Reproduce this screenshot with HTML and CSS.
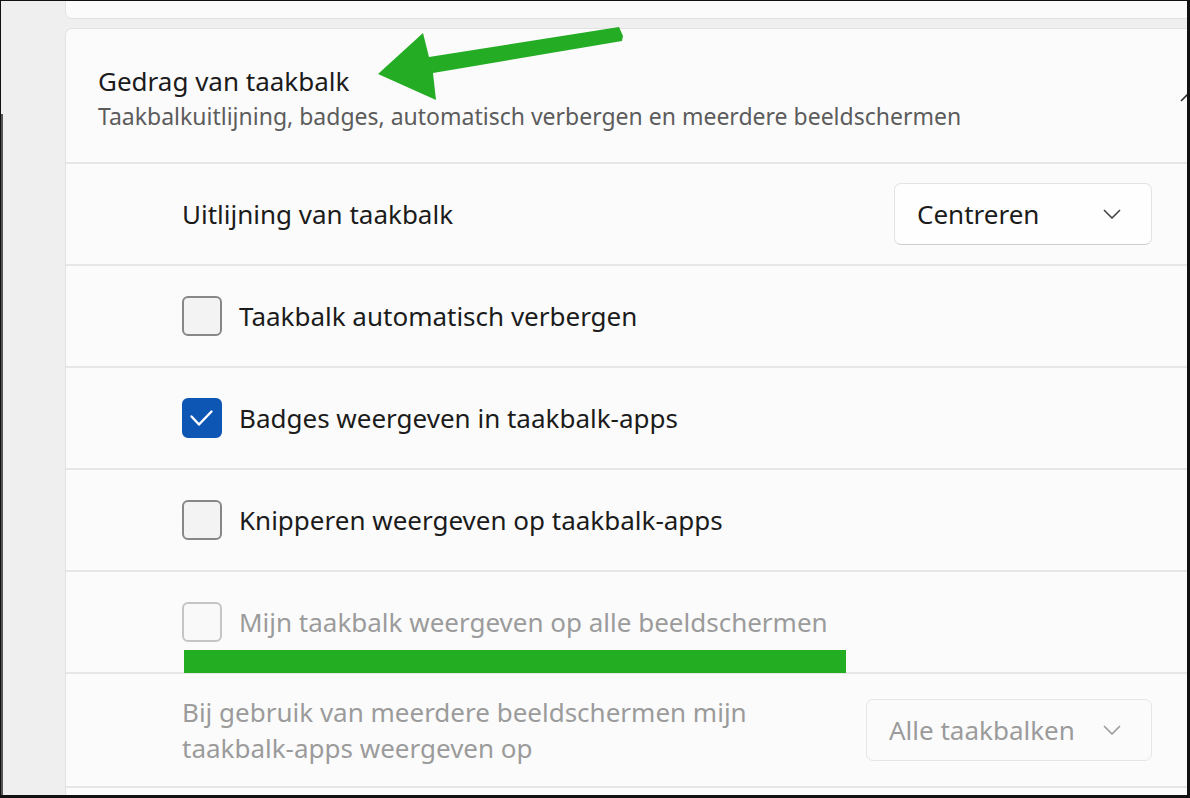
FILE: index.html
```html
<!DOCTYPE html>
<html lang="nl">
<head>
<meta charset="utf-8">
<title>Gedrag van taakbalk</title>
<link rel="stylesheet" href="styles.css">
</head>
<body>
<div class="frame">
  <div class="main">
    <div class="card prev"></div>
    <div class="card">
      <div class="header">
        <div class="header-text">
          <div class="title">Gedrag van taakbalk</div>
          <div class="subtitle">Taakbalkuitlijning, badges, automatisch verbergen en meerdere beeldschermen</div>
        </div>
        <svg class="chev-up" width="18" height="10" viewBox="0 0 18 10"><polyline points="1,9 9,1 17,9" fill="none" stroke="#333" stroke-width="1.6"/></svg>
      </div>
      <div class="row">
        <span class="label">Uitlijning van taakbalk</span>
        <div class="dropdown">
          <span>Centreren</span>
          <svg width="18" height="10" viewBox="0 0 18 10"><polyline points="1,1 9,9 17,1" fill="none" stroke="#444" stroke-width="1.6"/></svg>
        </div>
      </div>
      <div class="row">
        <span class="check"></span>
        <span class="label">Taakbalk automatisch verbergen</span>
      </div>
      <div class="row">
        <span class="check checked"><svg width="40" height="40" viewBox="0 0 40 40"><polyline points="9.5,18.5 17,26.5 29.5,13.5" fill="none" stroke="#fff" stroke-width="2.4" stroke-linecap="round" stroke-linejoin="round"/></svg></span>
        <span class="label">Badges weergeven in taakbalk-apps</span>
      </div>
      <div class="row">
        <span class="check"></span>
        <span class="label">Knipperen weergeven op taakbalk-apps</span>
      </div>
      <div class="row disabled marked">
        <span class="check"></span>
        <span class="label">Mijn taakbalk weergeven op alle beeldschermen</span>
        <span class="green-bar"></span>
      </div>
      <div class="row disabled tall">
        <span class="label two-line">Bij gebruik van meerdere beeldschermen mijn<br>taakbalk-apps weergeven op</span>
        <div class="dropdown dis">
          <span>Alle taakbalken</span>
          <svg width="18" height="10" viewBox="0 0 18 10"><polyline points="1,1 9,9 17,1" fill="none" stroke="#9a9a9a" stroke-width="1.6"/></svg>
        </div>
      </div>
      <div class="row stub"></div>
    </div>
  </div>
  <svg class="arrow" width="1190" height="140" viewBox="0 0 1190 140">
    <polygon points="378,74 423,33 429,57 619,27 623,36 622,41 433,73 436,100" fill="#24ad24"/>
  </svg>
</div>
</body>
</html>
```

FILE: styles.css
```css
* { box-sizing: border-box; }
html, body { margin: 0; padding: 0; }
body {
  width: 1190px;
  height: 798px;
  overflow: hidden;
  background: #efefef;
  font-family: "Noto Sans", "Open Sans", sans-serif;
  color: #1b1b1b;
}
.frame {
  position: relative;
  width: 1190px;
  height: 798px;
  border-top: 1px solid #111;
  border-left: 1px solid #111;
  border-right: 3px solid #111;
  border-bottom: 3px solid #111;
  background: #efefef;
  overflow: hidden;
}
.frame::before {
  content: "";
  position: absolute;
  left: -1px;
  top: 113px;
  bottom: 0;
  width: 3px;
  background: #555;
}
.main {
  padding-left: 64px;
  display: flex;
  flex-direction: column;
  gap: 9px;
}
.card {
  width: 1160px;
  flex-shrink: 0;
  background: #fbfbfb;
  border: 1px solid #e2e2e2;
  border-radius: 7px;
}
.card.prev {
  margin-top: -20px;
  height: 38px;
}
.header {
  height: 135px;
  display: flex;
  align-items: center;
  justify-content: space-between;
  padding: 0 26px 0 32px;
  border-bottom: 2px solid #e6e6e6;
}
.header-text { padding-top: 6px; }
.title {
  font-size: 26px;
  line-height: 34px;
  color: #1b1b1b;
}
.subtitle {
  font-size: 23px;
  line-height: 36px;
  color: #5c5c5c;
}
.chev-up { margin-top: 2px; }
.row {
  position: relative;
  height: 102px;
  display: flex;
  align-items: center;
  padding: 0 72px 0 116px;
  border-bottom: 2px solid #e6e6e6;
  font-size: 26px;
}
.row .label { flex: 1; padding-bottom: 1px; }
.row.tall { height: 114px; }
.row.stub { height: 20px; border-bottom: none; }
.check {
  width: 40px;
  height: 40px;
  flex-shrink: 0;
  margin-right: 17px;
  border: 2px solid #878787;
  border-radius: 6px;
  background: #f3f3f3;
}
.check.checked {
  background: #0e56b4;
  border-color: #0e56b4;
  position: relative;
}
.check.checked svg { position: absolute; left: -2px; top: -2px; }
.disabled { color: #9b9b9b; }
.disabled .check { border-color: #c5c5c5; background: #f9f9f9; }
.two-line { line-height: 36px; }
.dropdown {
  width: 258px;
  height: 62px;
  display: flex;
  align-items: center;
  justify-content: space-between;
  padding: 0 30px 0 22px;
  background: #fefefe;
  border: 1px solid #e3e3e3;
  border-bottom-color: #cfcfcf;
  border-radius: 7px;
  font-size: 26px;
  color: #1b1b1b;
}
.dropdown.dis {
  width: 286px;
  background: #fbfbfb;
  border-color: #e6e6e6;
  color: #9b9b9b;
}
.green-bar {
  position: absolute;
  left: 118px;
  bottom: -1px;
  width: 662px;
  height: 23px;
  background: #22ad22;
}
.arrow {
  position: absolute;
  left: -1px;
  top: -1px;
  pointer-events: none;
}
```
